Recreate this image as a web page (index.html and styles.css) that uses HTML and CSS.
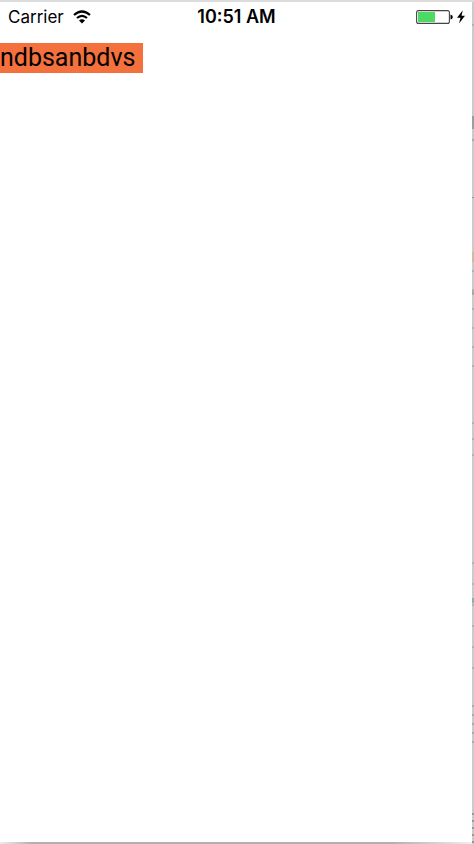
FILE: index.html
```
<!DOCTYPE html>
<html lang="en">
<head>
<meta charset="utf-8">
<meta name="viewport" content="width=device-width, initial-scale=1">
<title>Simulator</title>
<link rel="stylesheet" href="styles.css">
</head>
<body>
<div class="screen">
  <header class="status">
    <div class="network">
      <span>Carrier</span>
      <svg class="wifi" viewBox="0 0 18 14" aria-hidden="true">
        <path d="M1 5Q9-2 17 5" fill="none" stroke="#000" stroke-width="2.2"/>
        <path d="M4 8Q9 3.6 14 8" fill="none" stroke="#000" stroke-width="2.2"/>
        <path d="M6 10.4Q9 8 12 10.4L9 13.4Z"/>
      </svg>
    </div>
    <time class="clock">10:51 AM</time>
    <div class="power">
      <svg class="battery" viewBox="0 0 37 14" aria-hidden="true">
        <rect x=".6" y=".6" width="32.8" height="12.8" rx="2" fill="#fff" stroke="#444" stroke-width="1.1"/>
        <rect x="2" y="2" width="17" height="10" fill="#4cd964"/>
        <path d="M34.5 4.5Q36.8 5 36.8 7T34.5 9.5Z"/>
      </svg>
      <svg class="bolt" viewBox="0 0 8 14" aria-hidden="true">
        <path d="M5.8.3L0 7.8H3.5L2 13.6 8 5.8H4.5Z"/>
      </svg>
    </div>
  </header>
  <main>
    <p class="label">ndbsanbdvs</p>
  </main>
</div>
</body>
</html>
```
FILE: styles.css
```
* {
  box-sizing: border-box;
}

body {
  margin: 0;
  background: #fff;
  color: #000;
  font-family: Inter, "Liberation Sans", sans-serif;
}

.screen {
  min-height: 100vh;
  overflow: hidden;
  border-top: 2px solid #dcdcdc;
  padding-right: 2px;
  background:
    linear-gradient(90deg, #eee, #b0b0b0 32px, #b0b0b0 calc(100% - 80px), #eee) left bottom / calc(100% - 2px) 2px no-repeat,
    linear-gradient(#94a19e, #94a19e) right 114px / 2px 13px no-repeat,
    linear-gradient(#c8bda8, #c8bda8) right 250px / 2px 10px no-repeat,
    linear-gradient(#9bb09d, #9bb09d) right 289px / 2px 4px no-repeat,
    linear-gradient(#8fb0a5, #8fb0a5) right 596px / 2px 5px no-repeat,
    linear-gradient(transparent 16px, #a9b5af 16px, #a9b5af 18px, transparent 18px) right 6px / 2px 37px no-repeat,
    linear-gradient(transparent 7px, #aaa 7px, #aaa 9px, transparent 9px) right 130px / 2px 18px no-repeat,
    linear-gradient(#999, #999) right 195px / 2px 1px no-repeat,
    repeating-linear-gradient(#cbcbcb 0, #cbcbcb 14px, #a9b5b0 14px, #a9b5b0 16px, #cbcbcb 16px, #cbcbcb 19px) right 254px / 2px 122px no-repeat,
    repeating-linear-gradient(#cbcbcb 0, #cbcbcb 14px, #aab7b5 14px, #aab7b5 16px) right 406px / 2px 50px no-repeat,
    repeating-linear-gradient(#cbcbcb 0, #cbcbcb 12px, #a9b8b6 12px, #a9b8b6 14px, #cbcbcb 14px, #cbcbcb 21px) right 548px / 2px 122px no-repeat,
    repeating-linear-gradient(#cbcbcb 0, #cbcbcb 7px, #aaa 7px, #aaa 9px) right 696px / 2px 46px no-repeat,
    repeating-linear-gradient(#cbcbcb 0, #cbcbcb 5px, #999 5px, #999 7px) right 806px / 2px 35px no-repeat,
    linear-gradient(#cbcbcb, #cbcbcb) right top / 2px 100% no-repeat,
    #fff;
}

.status {
  display: grid;
  grid-template-columns: 1fr auto 1fr;
  align-items: center;
  height: 30px;
  padding: 0 7px 0 8px;
  font-size: 17px;
  line-height: 20px;
}

.network,
.power {
  display: flex;
  align-items: center;
  gap: 9px;
}

.power {
  justify-content: flex-end;
  gap: 4px;
}

.clock {
  font-size: 18px;
  font-weight: 600;
}

.wifi {
  width: 18px;
  height: 14px;
}

.battery {
  width: 37px;
  height: 14px;
}

.bolt {
  width: 8px;
  height: 14px;
}

.label {
  width: fit-content;
  margin: 11px 0 0 -8px;
  padding: 0 8px;
  background: #f4703c;
  font-family: Roboto, "Liberation Sans", sans-serif;
  font-size: 25px;
  line-height: 30px;
}
```
